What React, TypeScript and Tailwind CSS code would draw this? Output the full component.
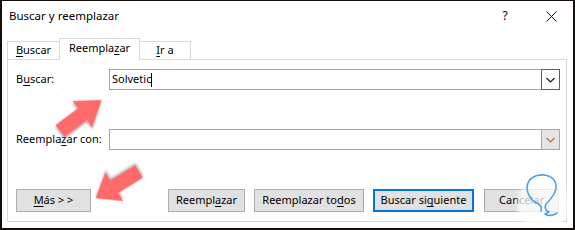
import React from 'react';

const U = ({children}: {children: React.ReactNode}) => (
    <span className="underline underline-offset-[2px] decoration-1">{children}</span>
);

function Chevron({color}: {color: string}) {
    return (
        <svg width="9" height="6" viewBox="0 0 9 6">
            <path d="M0.5 1 L4.5 5 L8.5 1" fill="none" stroke={color} strokeWidth="1.1"/>
        </svg>
    );
}

// arrow pointing along +x, drawn from the tail
function arrowPoints(L: number, w: number, hl: number, hw: number) {
    return [
        [0, -w / 2], [L - hl, -w / 2], [L - hl, -hw / 2], [L, 0],
        [L - hl, hw / 2], [L - hl, w / 2], [0, w / 2],
    ].map(p => p.join(',')).join(' ');
}

function Btn({children, className}: {children: React.ReactNode, className: string}) {
    return (
        <div className={`h-[23px] flex items-center justify-center bg-[#e1e1e1] ${className}`}>
            {children}
        </div>
    );
}

export default function App() {
    return (
        <div className="relative w-[575px] h-[230px] overflow-hidden bg-white border-[#170c0c] border-t border-l-2 border-r-2 border-b-2 flex flex-col font-['Noto_Sans',sans-serif] text-[11px] text-black">
            {/* title bar */}
            <div className="h-[37px] shrink-0 flex items-start pt-[6px] pl-[7px] leading-[18px]">
                <span className="text-[11.5px]">Buscar y reemplazar</span>
                <span className="ml-auto w-[10px] text-center text-[12px]">?</span>
                <svg className="ml-[36px] mr-[16px] mt-[4px]" width="11" height="11" viewBox="0 0 11 11">
                    <path d="M0.5 0.5 L10.5 10.5 M10.5 0.5 L0.5 10.5" stroke="#111" strokeWidth="1"/>
                </svg>
            </div>

            {/* tabs */}
            <div className="h-[21px] shrink-0 flex items-end pl-[5px]">
                <div className="w-[52px] h-[18px] border-l border-t border-[#d9d9d9] flex items-center justify-center">
                    <span><U>B</U>uscar</span>
                </div>
                <div className="relative z-10 -mb-px w-[81px] h-[22px] bg-white border-l border-t border-r border-[#d9d9d9] flex items-center justify-center pb-[2px]">
                    <span>Reempla<U>z</U>ar</span>
                </div>
                <div className="w-[51px] h-[18px] border-t border-r border-[#d9d9d9] flex items-center justify-center">
                    <span><U>I</U>r a</span>
                </div>
            </div>

            {/* panel */}
            <div className="ml-[5px] w-[560px] h-[163px] shrink-0 border border-[#d9d9d9] flex flex-col pl-[8px] pr-[6px] pt-[9px]">
                <div className="flex items-center h-[21px]">
                    <span className="w-[93px]">B<U>u</U>scar:</span>
                    <div className="flex-1 h-[21px] border border-[#a5a5a5] flex items-center">
                        <span className="pl-[2px] flex items-center">
                            Solvetic<span className="inline-block w-px h-[14px] bg-black"/>
                        </span>
                        <div className="ml-auto -mr-px -my-px w-[19px] h-[21px] border border-[#0078d7] bg-white flex items-center justify-center">
                            <Chevron color="#111"/>
                        </div>
                    </div>
                </div>

                <div className="mt-[39px] flex items-center h-[21px]">
                    <span className="w-[93px]">Reempla<U>z</U>ar con:</span>
                    <div className="flex-1 h-[21px] border border-[#a5a5a5] flex items-center">
                        <div className="ml-auto -mr-px -my-px w-[19px] h-[21px] border border-[#a5a5a5] bg-[#e5e5e5] flex items-center justify-center">
                            <Chevron color="#b06a3e"/>
                        </div>
                    </div>
                </div>

                <div className="mt-[39px] mr-px flex items-center">
                    <Btn className="w-[75px] border border-[#adadad]"><span><U>M</U>ás &gt; &gt;</span></Btn>
                    <div className="ml-auto flex items-center">
                        <Btn className="w-[77px] border border-[#adadad]"><span>Reempl<U>a</U>zar</span></Btn>
                        <Btn className="ml-[9px] w-[110px] border border-[#adadad]"><span>Reemplazar to<U>d</U>os</span></Btn>
                        <Btn className="ml-[9px] w-[101px] border-2 border-[#0078d7]"><span>Buscar si<U>g</U>uiente</span></Btn>
                        <Btn className="ml-[10px] w-[75px] border border-[#adadad]"><span>Cancelar</span></Btn>
                    </div>
                </div>
            </div>

            {/* annotations laid over the dialog */}
            <svg className="absolute -left-[2px] -top-px pointer-events-none" width="575" height="230" viewBox="0 0 575 230">
                <defs>
                    <filter id="sh" x="-20%" y="-20%" width="140%" height="140%">
                        <feDropShadow dx="-1.5" dy="1.5" stdDeviation="0.8" floodColor="#777" floodOpacity="0.55"/>
                    </filter>
                    <filter id="soft" x="-30%" y="-30%" width="160%" height="160%">
                        <feGaussianBlur stdDeviation="2"/>
                    </filter>
                </defs>
                <polygon points={arrowPoints(52, 15, 24, 33)} fill="#fe6a6a" filter="url(#sh)"
                         transform="translate(60 131) rotate(-36.8)"/>
                <polygon points={arrowPoints(51, 15, 22, 34)} fill="#fe6a6a" filter="url(#sh)"
                         transform="translate(139 171.5) rotate(148.4)"/>
                <circle cx="543" cy="204" r="26" fill="#fff" opacity="0.75" filter="url(#soft)"/>
                <path
                    d="M527 187 C528 178 536 174 544 175 C552 176 557 181 556 188 C555 195 550 200 547 203 C545 205 545 208 546 210 L549 212 L545 214 C548 216 553 216 557 213 M527 187 C527 193 530 200 537 203 C541 205 542 208 541 211"
                    fill="none" stroke="#4da3dc" strokeWidth="1.6" strokeLinecap="round" strokeLinejoin="round"/>
            </svg>
        </div>
    );
}
